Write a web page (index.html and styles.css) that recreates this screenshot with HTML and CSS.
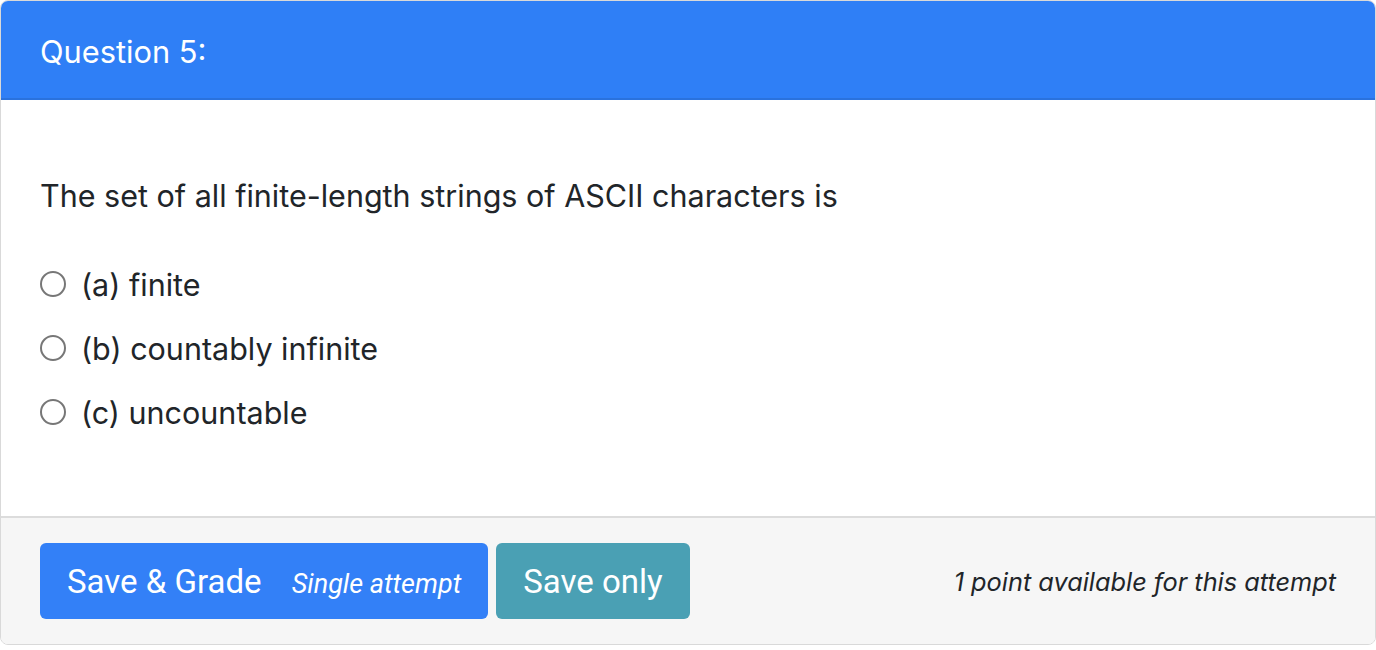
FILE: index.html
```html
<!DOCTYPE html>
<html lang="en">
<head>
    <meta charset="UTF-8">
    <title>Question 5</title>
    <link rel="stylesheet" href="styles.css">
</head>
<body>

<div class="question-card">
    <div class="card-header">
        <h2>Question 5:</h2>
    </div>

    <div class="card-body">
        <p class="question-text">The set of all finite-length strings of ASCII characters is</p>
        <div class="choices">
            <label class="choice"><input type="radio" name="q5" value="a"> (a) finite</label>
            <label class="choice"><input type="radio" name="q5" value="b"> (b) countably infinite</label>
            <label class="choice"><input type="radio" name="q5" value="c"> (c) uncountable</label>
        </div>
    </div>

    <div class="card-footer">
        <button class="btn btn-grade">Save &amp; Grade <small>Single attempt</small></button>
        <button class="btn btn-save">Save only</button>
        <span class="points">1 point available for this attempt</span>
    </div>
</div>

</body>
</html>
```

FILE: styles.css
```css
* {
    margin: 0;
    padding: 0;
    box-sizing: border-box;
}

body {
    font-family: Inter, 'Liberation Sans', Arial, sans-serif;
    background-color: #fff;
    color: #212529;
}

.question-card {
    width: 1376px;
    height: 645px;
    border: 1px solid #d9d9d9;
    border-radius: 8px;
    overflow: hidden;
    display: flex;
    flex-direction: column;
}

.card-header {
    background-color: #2f7ff6;
    border-bottom: 2px solid #2a72dd;
    height: 99px;
    padding: 0 39px;
    display: flex;
    align-items: center;
}

.card-header h2 {
    color: #fff;
    font-size: 30.8px;
    font-weight: normal;
    margin-top: 4px;
}

.card-body {
    flex: 1;
    padding: 73px 39px 0;
}

.question-text {
    font-size: 30.5px;
    line-height: 45px;
    margin-bottom: 34px;
}

.choice {
    display: flex;
    align-items: center;
    height: 64px;
    font-size: 30.5px;
    gap: 15px;
}

.choice input {
    appearance: none;
    width: 26px;
    height: 26px;
    border: 2px solid #777;
    border-radius: 50%;
    background: #fff;
}

.card-footer {
    background-color: #f6f6f6;
    border-top: 2px solid #dcdcdc;
    height: 128px;
    padding: 0 39px;
    display: flex;
    align-items: center;
    gap: 8px;
}

.btn {
    font-family: Roboto, sans-serif;
    font-size: 33px;
    color: #fff;
    border: none;
    border-radius: 6px;
    height: 76px;
    padding: 0 27px;
    cursor: pointer;
}

.btn small {
    font-size: 27px;
    font-style: italic;
    margin-left: 22px;
}

.btn-grade {
    background-color: #3380f7;
}

.btn-save {
    background-color: #4aa0b4;
}

.points {
    margin-left: auto;
    font-size: 25.3px;
    font-style: italic;
}
```
